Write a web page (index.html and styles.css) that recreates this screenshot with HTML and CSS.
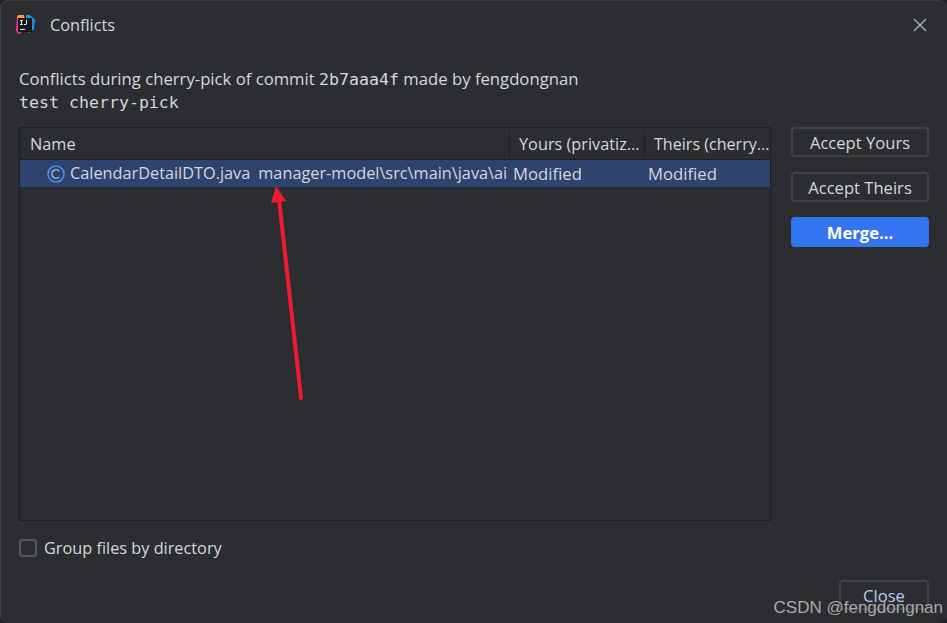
FILE: index.html
```html
<!doctype html>
<html lang="en">
    <head>
        <meta charset="UTF-8" />
        <meta name="viewport" content="width=device-width, initial-scale=1.0" />
        <title>Conflicts</title>
        <link rel="stylesheet" href="styles.css">
    </head>
    <body>
        <div class="dialog">
            <!-- Title bar -->
            <div class="titlebar">
                <svg class="app-icon" width="20" height="20" viewBox="0 0 20 20">
                    <path d="M2 1h7l1 2-4 15-3 1-2-3z" fill="#f0357f" />
                    <path d="M3 0h6v4H2z" fill="#f9a11b" />
                    <path d="M11 0h4l5 5-1 9-5 4-3-2z" fill="#0c9ff0" />
                    <path d="M14 3l4 3-1 7-3 3z" fill="#1768e0" />
                    <rect x="3" y="3" width="14" height="14" fill="#17181a" />
                    <path d="M5 5h3v1H7v3h1v1H5V9h1V6H5zM9 5h3v4l-1 1H9V9h2V5z" fill="#e8e8e8" />
                    <rect x="5" y="14" width="5" height="1" fill="#e8e8e8" />
                </svg>
                <span class="title">Conflicts</span>
                <svg class="close-x" width="14" height="14" viewBox="0 0 14 14">
                    <path d="M1 1l12 12M13 1L1 13" stroke="#b4b8bf" stroke-width="1.2" fill="none" />
                </svg>
            </div>

            <!-- Commit message -->
            <div class="message">
                <div>Conflicts during cherry-pick of commit <span class="mono">2b7aaa4f</span> made by fengdongnan</div>
                <div class="mono">test cherry-pick</div>
            </div>

            <div class="content">
                <!-- Conflict table -->
                <div class="table">
                    <div class="row head">
                        <div class="cell name">Name</div>
                        <div class="cell yours">Yours (privatiz...</div>
                        <div class="cell theirs">Theirs (cherry...</div>
                    </div>
                    <div class="row selected">
                        <div class="cell name">
                            <svg class="class-icon" width="18" height="18" viewBox="0 0 18 18">
                                <circle cx="9" cy="9" r="8" fill="none" stroke="#5389e6" stroke-width="1.600" />
                                <path d="M12 6A4.200 4.200 0 1 0 12 12" fill="none" stroke="#b9c6de" stroke-width="1.300" />
                            </svg>
                            <span class="file">CalendarDetailDTO.java</span>
                            <span class="path">manager-model\src\main\java\ai</span>
                        </div>
                        <div class="cell yours">Modified</div>
                        <div class="cell theirs">Modified</div>
                    </div>
                </div>

                <!-- Actions -->
                <div class="actions">
                    <button class="btn">Accept Yours</button>
                    <button class="btn">Accept Theirs</button>
                    <button class="btn primary">Merge...</button>
                </div>
            </div>

            <label class="group">
                <span class="checkbox"></span>
                Group files by directory
            </label>

            <div class="footer">
                <button class="btn close">Close</button>
            </div>
        </div>

        <!-- Annotation over the screenshot -->
        <svg class="arrow" width="40" height="220" viewBox="0 0 40 220">
            <path d="M34 213L12 14" stroke="#ee1c2e" stroke-width="4" stroke-linecap="round" fill="none" />
            <path d="M9 1L4 18L19 16z" fill="#ee1c2e" />
        </svg>
        <div class="watermark">CSDN @fengdongnan</div>
    </body>
</html>
```

FILE: styles.css
```css
/* Basic styling */
html,
body {
    margin: 0;
    height: 100%;
    overflow: hidden;
    background-color: #1f2023;
}
body {
    font-family: "Open Sans", "Noto Sans", Arial, sans-serif;
    font-size: 16.300px;
    color: #d5d8de;
}
.dialog {
    height: 623px;
    box-sizing: border-box;
    background-color: #2b2d30;
    border-radius: 8px;
    border: 1px solid #3a3c40;
    border-width: 1px 0 0 1px;
    padding: 0 18px 0 18px;
    display: flex;
    flex-direction: column;
}

/* Title bar */
.titlebar {
    height: 47px;
    display: flex;
    align-items: center;
    margin-left: -4px;
}
.app-icon {
    margin-right: 15px;
}
.title {
    flex: 1;
}
.close-x {
    margin-right: 2px;
}

/* Message */
.message {
    margin-top: 19px;
    line-height: 23px;
    font-size: 16.700px;
}
.mono {
    font-family: "DejaVu Sans Mono", "Liberation Mono", monospace;
    font-size: 16.600px;
}

/* Table and buttons */
.content {
    display: flex;
    margin-top: 13px;
}
.table {
    width: 750px;
    height: 392px;
    border: 1px solid #1e1f22;
    flex-shrink: 0;
}
.row {
    display: flex;
}
.head {
    height: 31px;
    border-bottom: 1px solid #1e1f22;
    align-items: center;
}
.head .cell {
    height: 24px;
    line-height: 24px;
    padding-left: 9px;
    box-sizing: border-box;
    overflow: hidden;
    white-space: nowrap;
}
.head .name {
    padding-left: 10px;
}
.head .yours,
.head .theirs {
    border-left: 1px solid #1e1f22;
}
.head .theirs {
    font-size: 16.100px;
}
.selected {
    height: 27px;
    line-height: 27px;
    background-color: #2e436e;
}
.selected .cell {
    padding-left: 4px;
    box-sizing: border-box;
    overflow: hidden;
    white-space: nowrap;
}
.selected .yours,
.selected .theirs {
    font-size: 16.700px;
}
.selected .name {
    display: flex;
    align-items: center;
    padding-left: 27px;
}
.cell.name {
    width: 489px;
}
.cell.yours {
    width: 135px;
}
.cell.theirs {
    flex: 1;
}
.class-icon {
    margin-right: 5px;
    flex-shrink: 0;
}
.file,
.path {
    flex-shrink: 0;
}
.path {
    margin-left: 8px;
}
.actions {
    margin-left: 20px;
    margin-top: 0;
    display: flex;
    flex-direction: column;
    gap: 15px;
}
.btn {
    width: 138px;
    height: 30px;
    box-sizing: border-box;
    background-color: transparent;
    border: 2px solid #3f4145;
    border-radius: 4px;
    color: #d5d8de;
    font: inherit;
    font-size: 16.600px;
    padding: 0;
}
.primary {
    background-color: #3574f0;
    border-color: #3574f0;
    color: #fff;
    font-weight: 700;
}

/* Bottom */
.group {
    margin-top: 18px;
    display: flex;
    align-items: center;
    gap: 7px;
    line-height: 18px;
}
.checkbox {
    width: 14px;
    height: 14px;
    border: 2px solid #54565b;
    border-radius: 3px;
}
.footer {
    margin-top: 23px;
    display: flex;
    justify-content: flex-end;
}
.close {
    width: 90px;
    color: #b5cdea;
}

/* Things lying over the dialog */
.arrow {
    position: absolute;
    left: 267px;
    top: 185px;
}
.watermark {
    position: absolute;
    right: 4px;
    top: 598px;
    font-family: "Liberation Sans", Arial, sans-serif;
    font-size: 17px;
    color: #a9a9a9;
}
```
